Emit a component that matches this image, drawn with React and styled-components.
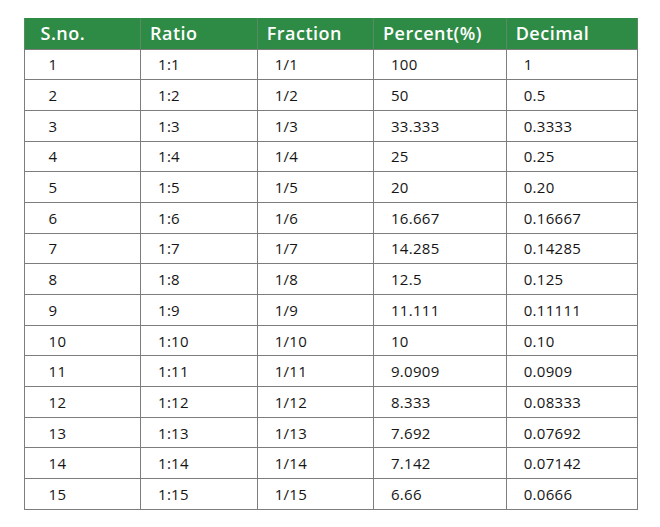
import React from "react";
import styled, { createGlobalStyle } from "styled-components";

const rows = [
  ["1", "1:1", "1/1", "100", "1"],
  ["2", "1:2", "1/2", "50", "0.5"],
  ["3", "1:3", "1/3", "33.333", "0.3333"],
  ["4", "1:4", "1/4", "25", "0.25"],
  ["5", "1:5", "1/5", "20", "0.20"],
  ["6", "1:6", "1/6", "16.667", "0.16667"],
  ["7", "1:7", "1/7", "14.285", "0.14285"],
  ["8", "1:8", "1/8", "12.5", "0.125"],
  ["9", "1:9", "1/9", "11.111", "0.11111"],
  ["10", "1:10", "1/10", "10", "0.10"],
  ["11", "1:11", "1/11", "9.0909", "0.0909"],
  ["12", "1:12", "1/12", "8.333", "0.08333"],
  ["13", "1:13", "1/13", "7.692", "0.07692"],
  ["14", "1:14", "1/14", "7.142", "0.07142"],
  ["15", "1:15", "1/15", "6.66", "0.0666"],
];

const headers = ["S.no.", "Ratio", "Fraction", "Percent(%)", "Decimal"];
const widths = [116.5, 116.7, 116.3, 132.7, 131.8];

const GlobalStyle = createGlobalStyle`
  body {
    margin: 0;
    background: #ffffff;
    font-family: "Open Sans", "Liberation Sans", sans-serif;
  }
`;

const Page = styled.div`
  padding: 18px 0 0 23.5px;
`;

const Table = styled.table`
  width: 614px;
  border-collapse: collapse;
  table-layout: fixed;
`;

const HeadRow = styled.tr`
  height: 31px;
  background: #2e8b45;
`;

const HeadCell = styled.th`
  color: #ffffff;
  font-size: 18px;
  font-weight: 600;
  letter-spacing: 0.5px;
  text-align: left;
  padding: 0 0 1px ${(p) => (p.$first ? 16 : 9)}px;
  border-left: 1px solid #5a8a64;
  border-right: 1px solid #5a8a64;
`;

const BodyRow = styled.tr`
  height: 30.7px;
`;

const Cell = styled.td`
  color: #151515;
  font-size: 15px;
  font-weight: 500;
  letter-spacing: 0.3px;
  text-align: left;
  padding: 0 0 0 ${(p) => (p.$first ? 24 : 17)}px;
  border: 1px solid #7d7d7d;
`;

export default function App() {
  return (
    <Page>
      <GlobalStyle />
      <Table>
        <colgroup>
          {widths.map((w, i) => (
            <col key={i} style={{ width: w }} />
          ))}
        </colgroup>
        <thead>
          <HeadRow>
            {headers.map((h, i) => (
              <HeadCell key={h} $first={i === 0}>
                {h}
              </HeadCell>
            ))}
          </HeadRow>
        </thead>
        <tbody>
          {rows.map((r) => (
            <BodyRow key={r[0]}>
              {r.map((v, i) => (
                <Cell key={i} $first={i === 0}>
                  {v}
                </Cell>
              ))}
            </BodyRow>
          ))}
        </tbody>
      </Table>
    </Page>
  );
}
